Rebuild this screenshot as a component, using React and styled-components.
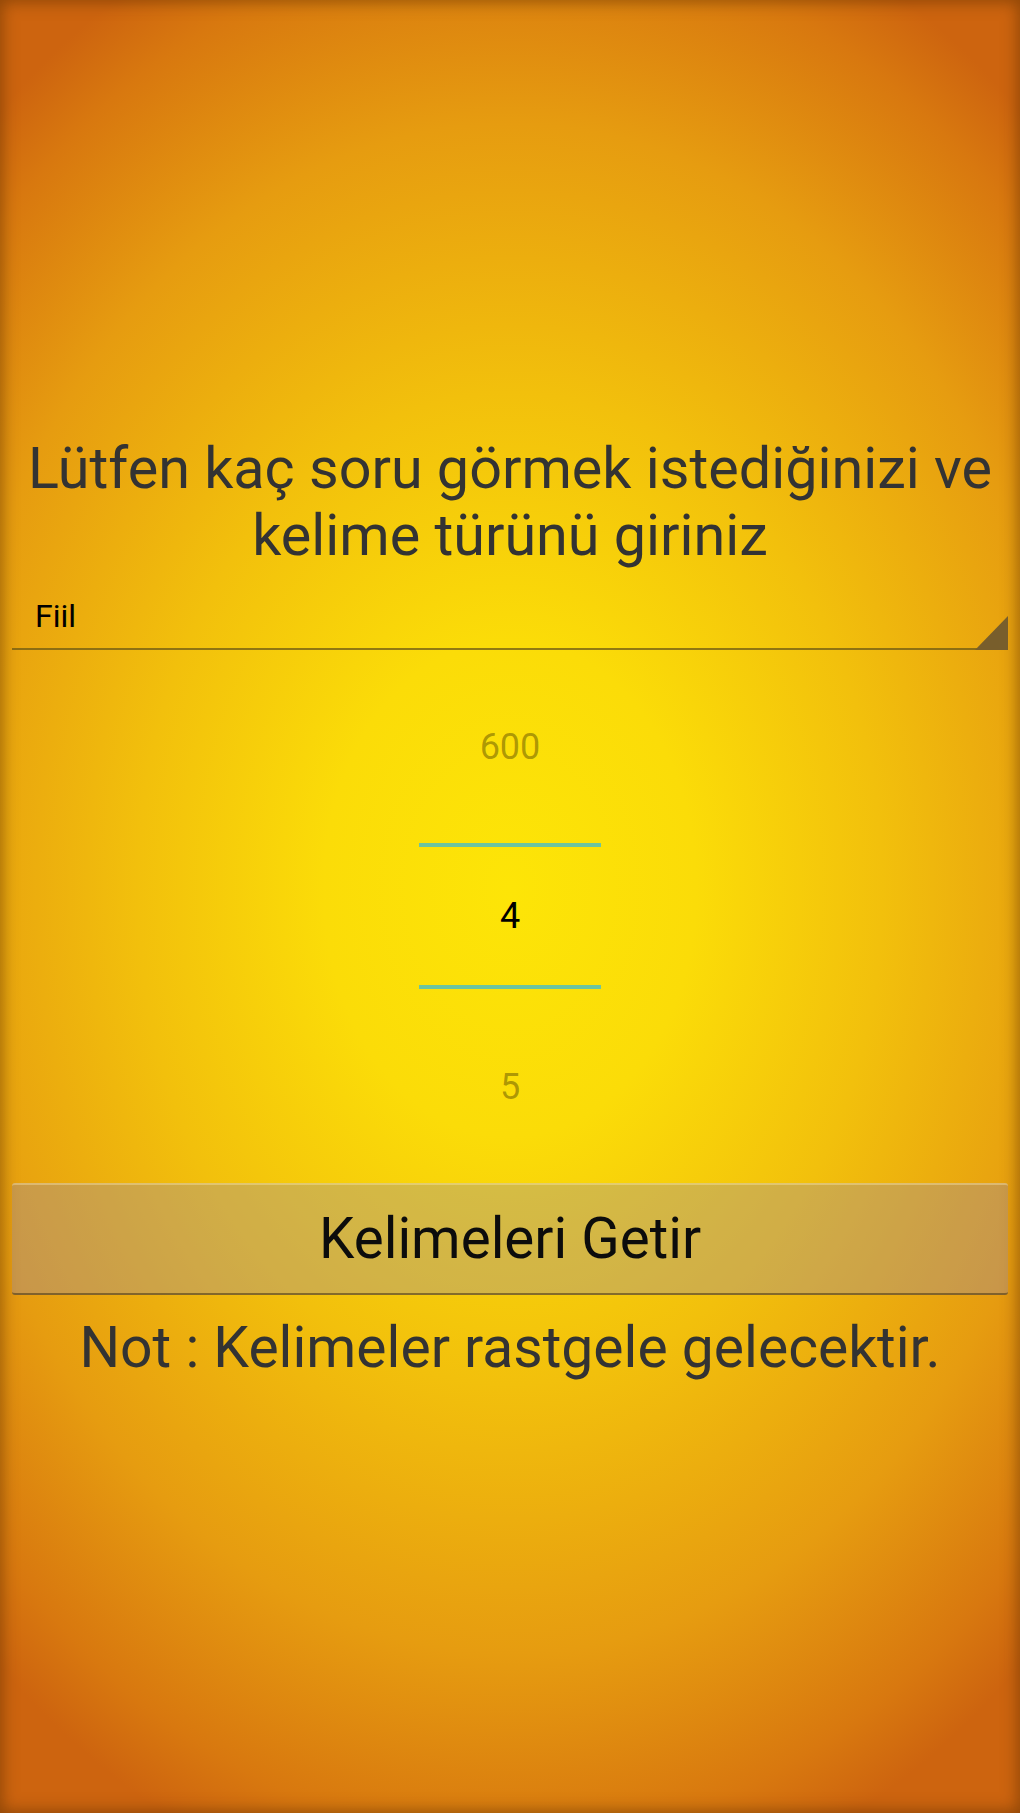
import React from "react";
import styled, { createGlobalStyle } from "styled-components";

const GlobalStyle = createGlobalStyle`
  html, body {
    margin: 0;
    padding: 0;
    background: #d4700f;
  }
  * {
    box-sizing: border-box;
  }
`;

const Screen = styled.div`
  width: 1020px;
  height: 1813px;
  display: flex;
  flex-direction: column;
  padding: 435px 12px 0;
  font-family: Roboto, "Noto Sans", sans-serif;
  background: radial-gradient(
    ellipse 76% 57% at 50% 49%,
    #fde507 0%,
    #fbdc08 24%,
    #f2c00c 48%,
    #e69c10 74%,
    #d8780f 92%,
    #cd640f 100%
  );
  box-shadow: inset 0 0 16px 2px rgba(90, 45, 0, 0.55);
  overflow: hidden;
`;

const Title = styled.h1`
  margin: 0;
  font-size: 57.5px;
  line-height: 67px;
  font-weight: 400;
  text-align: center;
  color: #333333;
`;

const SpinnerRow = styled.div`
  display: flex;
  align-items: flex-end;
  justify-content: space-between;
  height: 81px;
  border-bottom: 2px solid rgba(110, 90, 20, 0.75);
`;

const SpinnerLabel = styled.span`
  padding: 0 0 12px 23px;
  font-size: 32px;
  line-height: 40px;
  color: #000;
`;

const Arrow = styled.svg`
  display: block;
  width: 33px;
  height: 34px;
  margin-bottom: -2px;
`;

const Picker = styled.div`
  display: flex;
  flex-direction: column;
  align-items: center;
  margin: 57px auto 0;
  width: 182px;
`;

const PickerItem = styled.div`
  width: 100%;
  height: ${(p) => (p.$selected ? "138px" : "80px")};
  line-height: ${(p) => (p.$selected ? "138px" : "80px")};
  margin: ${(p) => (p.$selected ? "0" : p.$top ? "0 0 56px" : "58px 0 0")};
  text-align: center;
  font-size: 36px;
  color: ${(p) => (p.$selected ? "#000" : "rgba(60, 50, 0, 0.42)")};
`;

const Divider = styled.div`
  width: 100%;
  height: 4px;
  background: #6cc4a0;
`;

const FetchButton = styled.button`
  margin-top: 56px;
  height: 112px;
  width: 100%;
  border: none;
  border-top: 2px solid rgba(255, 240, 190, 0.35);
  border-bottom: 2px solid rgba(90, 70, 30, 0.65);
  border-radius: 3px;
  background: rgba(150, 140, 175, 0.36);
  font-family: Roboto, "Noto Sans", sans-serif;
  font-size: 56.5px;
  color: #0c0c0c;
  padding: 0;
`;

const Note = styled.p`
  margin: 19px 0 0;
  font-size: 57px;
  line-height: 67px;
  text-align: center;
  color: #333333;
`;

export default function App() {
  return (
    <>
      <GlobalStyle />
      <Screen>
        <Title>
          Lütfen kaç soru görmek istediğinizi ve
          <br />
          kelime türünü giriniz
        </Title>
        <SpinnerRow>
          <SpinnerLabel>Fiil</SpinnerLabel>
          <Arrow viewBox="0 0 33 34">
            <polygon points="33,0 33,34 0,34" fill="#785e2c" />
          </Arrow>
        </SpinnerRow>
        <Picker>
          <PickerItem $top>600</PickerItem>
          <Divider />
          <PickerItem $selected>4</PickerItem>
          <Divider />
          <PickerItem>5</PickerItem>
        </Picker>
        <FetchButton>Kelimeleri Getir</FetchButton>
        <Note>Not : Kelimeler rastgele gelecektir.</Note>
      </Screen>
    </>
  );
}
